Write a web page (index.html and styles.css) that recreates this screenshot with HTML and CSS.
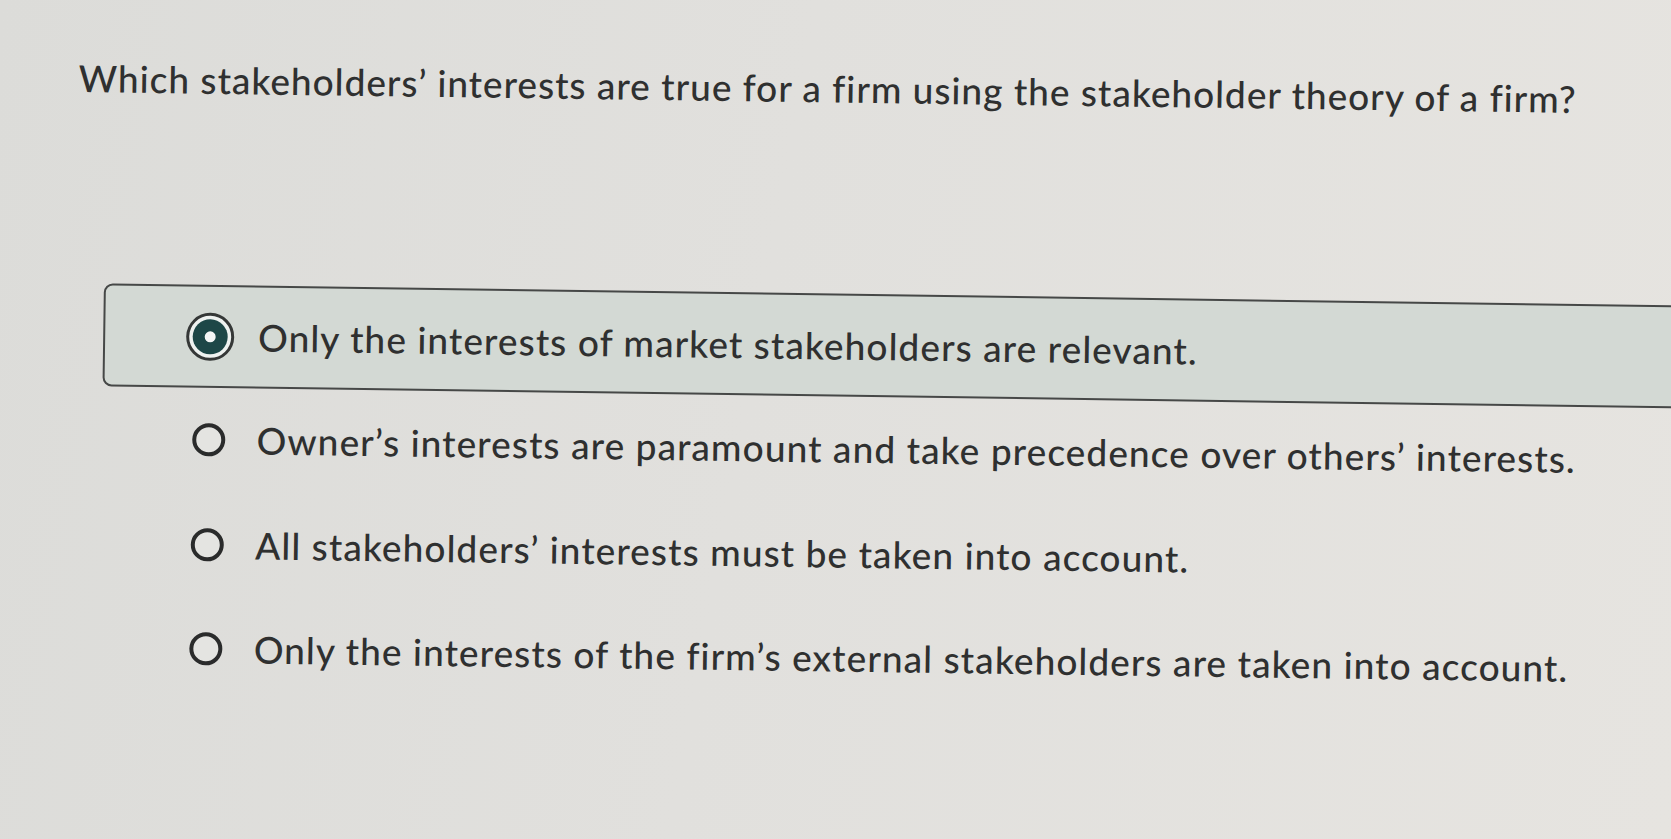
FILE: index.html
```html
<!DOCTYPE html>
<html lang="en">
<head>
<meta charset="utf-8">
<title>Stakeholder question</title>
<link rel="stylesheet" href="styles.css">
</head>
<body>
<main class="page">
  <h1 class="question">Which stakeholders’ interests are true for a firm using the stakeholder theory of a firm?</h1>
  <ul class="options">
    <li class="option selected">
      <span class="radio">
        <svg width="50" height="50" viewBox="0 0 50 50" aria-hidden="true">
          <circle cx="25" cy="25" r="22.5" fill="#eef2f0" stroke="#353837" stroke-width="3"/>
          <circle cx="25" cy="25" r="17.5" fill="#1d4747"/>
          <circle cx="25" cy="25" r="5.5" fill="#f4f6f5"/>
        </svg>
      </span>
      <span class="label">Only the interests of market stakeholders are relevant.</span>
    </li>
    <li class="option">
      <span class="radio">
        <svg width="50" height="50" viewBox="0 0 50 50" aria-hidden="true">
          <circle cx="25" cy="25" r="14.5" fill="#e4e4e1" stroke="#2a2b2b" stroke-width="4"/>
        </svg>
      </span>
      <span class="label">Owner’s interests are paramount and take precedence over others’ interests.</span>
    </li>
    <li class="option">
      <span class="radio">
        <svg width="50" height="50" viewBox="0 0 50 50" aria-hidden="true">
          <circle cx="25" cy="25" r="14.5" fill="#e4e4e1" stroke="#2a2b2b" stroke-width="4"/>
        </svg>
      </span>
      <span class="label">All stakeholders’ interests must be taken into account.</span>
    </li>
    <li class="option">
      <span class="radio">
        <svg width="50" height="50" viewBox="0 0 50 50" aria-hidden="true">
          <circle cx="25" cy="25" r="14.5" fill="#e4e4e1" stroke="#2a2b2b" stroke-width="4"/>
        </svg>
      </span>
      <span class="label">Only the interests of the firm’s external stakeholders are taken into account.</span>
    </li>
  </ul>
</main>
</body>
</html>
```
FILE: styles.css
```css
html, body {
  margin: 0;
  padding: 0;
  height: 100%;
  overflow: hidden;
}

body {
  background: linear-gradient(100deg, #dcdcd9 0%, #e1e0dd 45%, #e6e4e0 100%);
  font-family: Lato, "Open Sans", "Liberation Sans", sans-serif;
  font-variant-ligatures: none;
  color: #2f3030;
}

.page {
  padding: 57px 0 0 75px;
  transform: rotate(0.8deg);
  transform-origin: 150px 350px;
}

.question {
  margin: 0;
  font-size: 37px;
  line-height: 44px;
  font-weight: 500;
  letter-spacing: 1px;
  white-space: nowrap;
}

.options {
  list-style: none;
  margin: 183px 0 0 28px;
  padding: 0;
  display: flex;
  flex-direction: column;
}

.option {
  display: flex;
  align-items: center;
  gap: 23px;
  height: 104.5px;
  box-sizing: border-box;
  padding-left: 80px;
  border: 2px solid transparent;
  border-radius: 9px;
  width: 1720px;
  font-size: 37px;
  line-height: 44px;
  font-weight: 500;
  letter-spacing: 1.08px;
  white-space: nowrap;
}

.option.selected {
  height: 103px;
  border-color: #464847;
  background: #d3d9d4;
}

.radio {
  display: flex;
  width: 50px;
  height: 50px;
  flex: none;
}
```
